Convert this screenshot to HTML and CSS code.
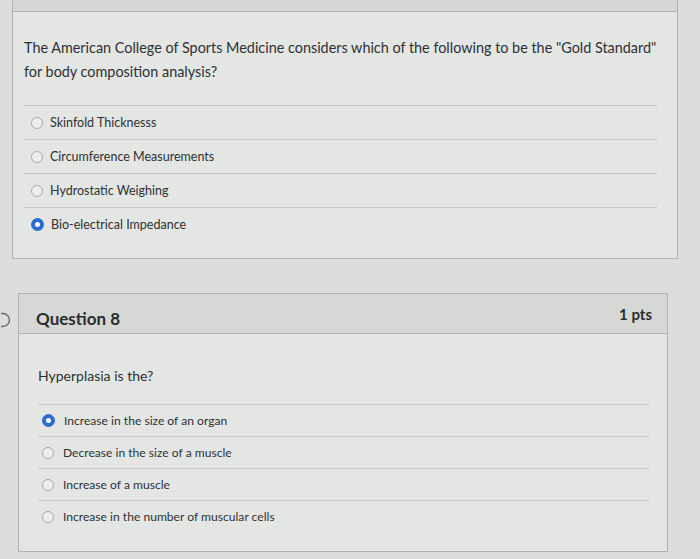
FILE: index.html
```html
<!DOCTYPE html>
<html>
<head>
<meta charset="utf-8">
<link rel="stylesheet" href="styles.css">
</head>
<body>
<div class="page">
  <section class="card card-top">
    <div class="card-head-stub"></div>
    <div class="card-body body-top">
      <p class="qtext">The American College of Sports Medicine considers which of the following to be the "Gold Standard" for body composition analysis?</p>
      <ul class="answers answers-top">
        <li class="opt"><span class="radio"></span><span class="label">Skinfold Thicknesss</span></li>
        <li class="opt"><span class="radio"></span><span class="label">Circumference Measurements</span></li>
        <li class="opt"><span class="radio"></span><span class="label">Hydrostatic Weighing</span></li>
        <li class="opt"><span class="radio checked"></span><span class="label">Bio-electrical Impedance</span></li>
      </ul>
    </div>
  </section>

  <section class="card card-q8">
    <svg class="flag" width="10" height="16" viewBox="0 0 10 16"><path d="M-4 1.5 H2 A6.5 6.5 0 0 1 2 14.5 H-4" fill="none" stroke="#6b6d6b" stroke-width="1.4"/></svg>
    <header class="card-head">
      <h2 class="qtitle">Question 8</h2>
      <span class="pts">1 pts</span>
    </header>
    <div class="card-body body-q8">
      <p class="qtext qtext-q8">Hyperplasia is the?</p>
      <ul class="answers answers-q8">
        <li class="opt"><span class="radio checked"></span><span class="label">Increase in the size of an organ</span></li>
        <li class="opt"><span class="radio"></span><span class="label">Decrease in the size of a muscle</span></li>
        <li class="opt"><span class="radio"></span><span class="label">Increase of a muscle</span></li>
        <li class="opt"><span class="radio"></span><span class="label">Increase in the number of muscular cells</span></li>
      </ul>
    </div>
  </section>
</div>
</body>
</html>
```

FILE: styles.css
```css
html, body {
  margin: 0;
  padding: 0;
}
body {
  background: #dcdedc;
  font-family: Lato, "Open Sans", "Liberation Sans", sans-serif;
  color: #2e3133;
  width: 700px;
  height: 559px;
  overflow: hidden;
}
.page {
  display: flex;
  flex-direction: column;
}
.card {
  background: #e4e6e4;
  border: 1px solid #b1b3b1;
  box-sizing: border-box;
}
.card-top {
  margin-left: 12px;
  width: 666px;
  border-top: none;
}
.card-head-stub {
  height: 11px;
  background: #d5d7d5;
  border-bottom: 1px solid #b1b3b1;
}
.body-top {
  padding: 24px 14px 17px 11px;
}
.qtext {
  margin: 0;
  font-size: 14.4px;
  line-height: 24px;
}
.qtext-q8 {
  font-size: 14px;
}
.answers {
  list-style: none;
  margin: 0;
  padding: 0;
  border-top: 1px solid #c7c9c7;
}
.answers-top {
  margin-top: 21px;
  margin-right: 6px;
}
.opt {
  display: flex;
  align-items: center;
  font-size: 12.5px;
  border-bottom: 1px solid #c7c9c7;
}
.opt:last-child {
  border-bottom: none;
}
.answers-top .opt {
  height: 33px;
  padding-left: 7px;
  gap: 7px;
}
.radio {
  width: 12px;
  height: 12px;
  border-radius: 50%;
  border: 1px solid #a9abab;
  background: #eceeec;
  box-sizing: border-box;
  flex: none;
}
.radio.checked {
  border: 4px solid #2c6bd1;
  background: #ffffff;
  width: 13px;
  height: 13px;
}
.card-q8 {
  position: relative;
  margin-top: 34px;
  margin-left: 18px;
  width: 650px;
}
.flag {
  position: absolute;
  left: -18px;
  top: 18px;
}
.card-head {
  height: 39px;
  background: #d6d8d6;
  border-bottom: 1px solid #b1b3b1;
  display: flex;
  justify-content: space-between;
  align-items: flex-start;
  padding: 0 15px 0 17px;
}
.qtitle {
  margin: 15px 0 0;
  font-size: 17px;
  font-weight: 700;
  line-height: 20px;
  color: #2a2d2f;
}
.pts {
  margin-top: 10px;
  font-size: 15px;
  font-weight: 700;
  line-height: 20px;
  color: #2a2d2f;
}
.body-q8 {
  padding: 30px 18px 19px 19px;
}
.answers-q8 {
  margin-top: 16px;
}
.answers-q8 .opt {
  height: 31px;
  padding-left: 4px;
  gap: 9px;
  font-size: 12.1px;
}
```
